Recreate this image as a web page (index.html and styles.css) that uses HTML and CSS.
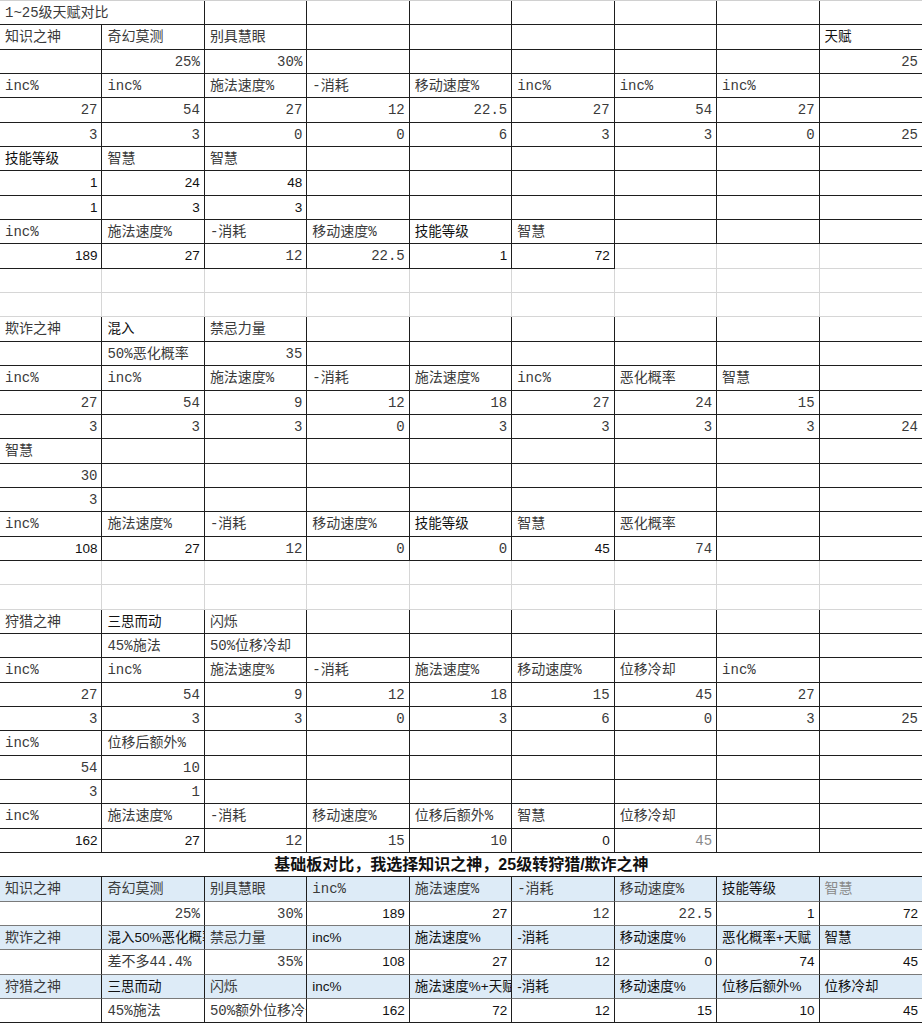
FILE: index.html
```html
<!DOCTYPE html>
<html lang="zh-CN">
<head>
<meta charset="utf-8">
<title>1~25级天赋对比</title>
<link rel="stylesheet" href="styles.css">
</head>
<body>
<div class="sheet">
  <div class="row"><div class="span2">1~25级天赋对比</div><div></div><div></div><div></div><div></div><div></div><div></div><div></div></div>
  <div class="row"><div>知识之神</div><div>奇幻莫测</div><div>别具慧眼</div><div></div><div></div><div></div><div></div><div></div><div class="s">天赋</div></div>
  <div class="row"><div></div><div class="n">25%</div><div class="n">30%</div><div></div><div></div><div></div><div></div><div></div><div class="n">25</div></div>
  <div class="row"><div>inc%</div><div>inc%</div><div>施法速度%</div><div>-消耗</div><div>移动速度%</div><div>inc%</div><div>inc%</div><div>inc%</div><div></div></div>
  <div class="row"><div class="n">27</div><div class="n">54</div><div class="n">27</div><div class="n">12</div><div class="n">22.5</div><div class="n">27</div><div class="n">54</div><div class="n">27</div><div></div></div>
  <div class="row"><div class="n">3</div><div class="n">3</div><div class="n">0</div><div class="n">0</div><div class="n">6</div><div class="n">3</div><div class="n">3</div><div class="n">0</div><div class="n">25</div></div>
  <div class="row"><div class="s">技能等级</div><div>智慧</div><div>智慧</div><div></div><div></div><div></div><div></div><div></div><div></div></div>
  <div class="row"><div class="s n">1</div><div class="s n">24</div><div class="s n">48</div><div></div><div></div><div></div><div></div><div></div><div></div></div>
  <div class="row"><div class="s n">1</div><div class="s n">3</div><div class="s n">3</div><div></div><div></div><div></div><div></div><div></div><div></div></div>
  <div class="row"><div>inc%</div><div>施法速度%</div><div>-消耗</div><div>移动速度%</div><div class="s">技能等级</div><div>智慧</div><div></div><div></div><div></div></div>
  <div class="row"><div class="s n">189</div><div class="s n">27</div><div class="n">12</div><div class="n">22.5</div><div class="s n">1</div><div class="s n">72</div><div class="x"></div><div class="x"></div><div class="x"></div></div>
  <div class="row blank"><div></div><div></div><div></div><div></div><div></div><div></div><div></div><div></div><div></div></div>
  <div class="row blank"><div></div><div></div><div></div><div></div><div></div><div></div><div></div><div></div><div></div></div>

  <div class="row"><div>欺诈之神</div><div class="s">混入</div><div>禁忌力量</div><div></div><div></div><div></div><div></div><div></div><div></div></div>
  <div class="row"><div></div><div>50%恶化概率</div><div class="n">35</div><div></div><div></div><div></div><div></div><div></div><div></div></div>
  <div class="row"><div>inc%</div><div>inc%</div><div>施法速度%</div><div>-消耗</div><div>施法速度%</div><div>inc%</div><div>恶化概率</div><div>智慧</div><div></div></div>
  <div class="row"><div class="n">27</div><div class="n">54</div><div class="n">9</div><div class="n">12</div><div class="n">18</div><div class="n">27</div><div class="n">24</div><div class="n">15</div><div></div></div>
  <div class="row"><div class="n">3</div><div class="n">3</div><div class="n">3</div><div class="n">0</div><div class="n">3</div><div class="n">3</div><div class="n">3</div><div class="n">3</div><div class="n">24</div></div>
  <div class="row"><div>智慧</div><div></div><div></div><div></div><div></div><div></div><div></div><div></div><div></div></div>
  <div class="row"><div class="n">30</div><div></div><div></div><div></div><div></div><div></div><div></div><div></div><div></div></div>
  <div class="row"><div class="n">3</div><div></div><div></div><div></div><div></div><div></div><div></div><div></div><div></div></div>
  <div class="row"><div>inc%</div><div>施法速度%</div><div>-消耗</div><div>移动速度%</div><div class="s">技能等级</div><div>智慧</div><div>恶化概率</div><div></div><div></div></div>
  <div class="row"><div class="s n">108</div><div class="s n">27</div><div class="n">12</div><div class="n">0</div><div class="n">0</div><div class="s n">45</div><div class="n">74</div><div></div><div></div></div>
  <div class="row blank"><div></div><div></div><div></div><div></div><div></div><div></div><div></div><div></div><div></div></div>
  <div class="row blank"><div></div><div></div><div></div><div></div><div></div><div></div><div></div><div></div><div></div></div>

  <div class="row"><div>狩猎之神</div><div class="s">三思而动</div><div>闪烁</div><div></div><div></div><div></div><div></div><div></div><div></div></div>
  <div class="row"><div></div><div>45%施法</div><div>50%位移冷却</div><div></div><div></div><div></div><div></div><div></div><div></div></div>
  <div class="row"><div>inc%</div><div>inc%</div><div>施法速度%</div><div>-消耗</div><div>施法速度%</div><div>移动速度%</div><div>位移冷却</div><div>inc%</div><div></div></div>
  <div class="row"><div class="n">27</div><div class="n">54</div><div class="n">9</div><div class="n">12</div><div class="n">18</div><div class="n">15</div><div class="n">45</div><div class="n">27</div><div></div></div>
  <div class="row"><div class="n">3</div><div class="n">3</div><div class="n">3</div><div class="n">0</div><div class="n">3</div><div class="n">6</div><div class="n">0</div><div class="n">3</div><div class="n">25</div></div>
  <div class="row"><div>inc%</div><div>位移后额外%</div><div></div><div></div><div></div><div></div><div></div><div></div><div></div></div>
  <div class="row"><div class="n">54</div><div class="n">10</div><div></div><div></div><div></div><div></div><div></div><div></div><div></div></div>
  <div class="row"><div class="n">3</div><div class="n">1</div><div></div><div></div><div></div><div></div><div></div><div></div><div></div></div>
  <div class="row"><div>inc%</div><div>施法速度%</div><div>-消耗</div><div>移动速度%</div><div>位移后额外%</div><div>智慧</div><div>位移冷却</div><div></div><div></div></div>
  <div class="row"><div class="s n">162</div><div class="s n">27</div><div class="n">12</div><div class="n">15</div><div class="n">10</div><div class="s n">0</div><div class="n g">45</div><div></div><div></div></div>

  <div class="row"><div class="title">基础板对比，我选择知识之神，25级转狩猎/欺诈之神</div></div>
  <div class="row blue"><div>知识之神</div><div>奇幻莫测</div><div>别具慧眼</div><div>inc%</div><div>施法速度%</div><div>-消耗</div><div>移动速度%</div><div class="s">技能等级</div><div class="g">智慧</div></div>
  <div class="row low"><div></div><div class="n">25%</div><div class="n">30%</div><div class="s n">189</div><div class="s n">27</div><div class="n">12</div><div class="n">22.5</div><div class="s n">1</div><div class="s n">72</div></div>
  <div class="row blue"><div>欺诈之神</div><div class="s">混入50%恶化概率</div><div>禁忌力量</div><div class="s">inc%</div><div class="s">施法速度%</div><div class="s">-消耗</div><div class="s">移动速度%</div><div class="s">恶化概率+天赋</div><div class="s">智慧</div></div>
  <div class="row low"><div></div><div>差不多44.4%</div><div class="n">35%</div><div class="s n">108</div><div class="s n">27</div><div class="s n">12</div><div class="s n">0</div><div class="s n">74</div><div class="s n">45</div></div>
  <div class="row blue"><div>狩猎之神</div><div class="s">三思而动</div><div>闪烁</div><div class="s">inc%</div><div class="s">施法速度%+天赋</div><div class="s">-消耗</div><div class="s">移动速度%</div><div class="s">位移后额外%</div><div class="s">位移冷却</div></div>
  <div class="row low last"><div></div><div>45%施法</div><div>50%额外位移冷却</div><div class="s n">162</div><div class="s n">72</div><div class="s n">12</div><div class="s n">15</div><div class="s n">10</div><div class="s n">45</div></div>
</div>
</body>
</html>
```
FILE: styles.css
```css
html, body {
  margin: 0;
  padding: 0;
  background: #ffffff;
}

.sheet {
  display: grid;
  grid-template-columns: repeat(9, 1fr);
  grid-auto-rows: 24.35px;
  width: 922px;
  font-family: "Liberation Mono", "Noto Sans CJK SC", monospace;
  font-size: 14px;
  color: #3a3a3a;
  border-top: 1px solid #d0d0d0;
  box-sizing: border-box;
}

.row {
  display: contents;
}

.row > div {
  box-sizing: border-box;
  border-right: 1px solid #1e1e1e;
  border-bottom: 1px solid #1e1e1e;
  padding: 0 4px 0 5px;
  line-height: 24px;
  white-space: nowrap;
  overflow: hidden;
}

.row > div:last-child {
  border-right: none;
}

.span2 {
  grid-column: span 2;
}

.n {
  text-align: right;
}

.s {
  font-family: "Liberation Sans", "Noto Sans CJK SC", sans-serif;
  font-size: 13.5px;
  color: #111111;
}

.g {
  color: #8a8a8a;
}

.row > div.x {
  border-color: #d6d6d6;
  border-top: none;
}

.blank > div {
  border-color: #d6d6d6 !important;
}

.title {
  grid-column: span 9;
  text-align: center;
  font-family: "Liberation Sans", "Noto Sans CJK SC", sans-serif;
  font-weight: bold;
  font-size: 16px;
  color: #111111;
}

.blue > div {
  background: #ddebf7;
  border-bottom-color: #7a7a7a;
}

.low > div {
  border-bottom-color: #7a7a7a;
}

.last > div {
  border-bottom-color: #1e1e1e;
}
```
